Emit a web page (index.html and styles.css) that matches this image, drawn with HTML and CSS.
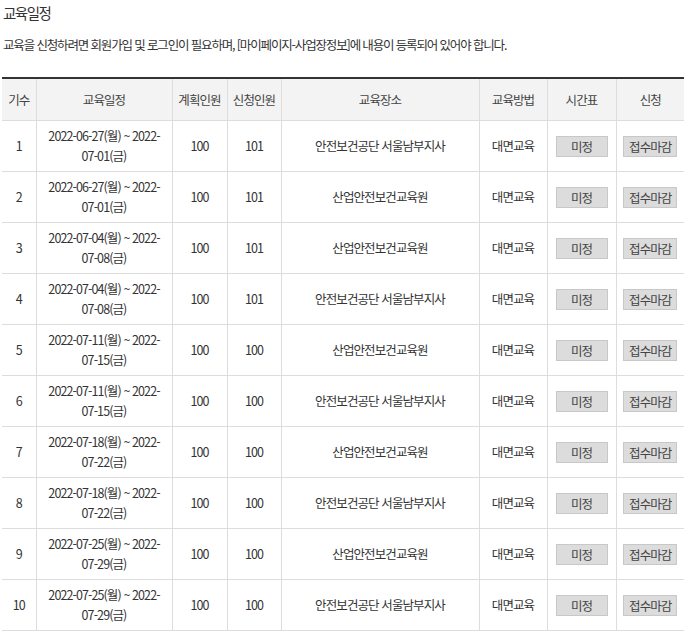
FILE: index.html
```html
<!DOCTYPE html>
<html lang="ko">
<head>
<meta charset="utf-8">
<link rel="stylesheet" href="styles.css">
</head>
<body>
<div class="page">
  <h2 class="title">교육일정</h2>
  <p class="desc">교육을 신청하려면 회원가입 및 로그인이 필요하며, [마이페이지-사업장정보]에 내용이 등록되어 있어야 합니다.</p>
  <table class="sched">
    <colgroup>
      <col class="c1"><col class="c2"><col class="c3"><col class="c4"><col class="c5"><col class="c6"><col class="c7"><col class="c8">
    </colgroup>
    <thead>
      <tr><th>기수</th><th>교육일정</th><th>계획인원</th><th>신청인원</th><th>교육장소</th><th>교육방법</th><th>시간표</th><th>신청</th></tr>
    </thead>
    <tbody>
      <tr><td>1</td><td>2022-06-27(월) ~ 2022-07-01(금)</td><td>100</td><td>101</td><td>안전보건공단 서울남부지사</td><td>대면교육</td><td><span class="btn b1">미정</span></td><td><span class="btn b2">접수마감</span></td></tr>
      <tr><td>2</td><td>2022-06-27(월) ~ 2022-07-01(금)</td><td>100</td><td>101</td><td>산업안전보건교육원</td><td>대면교육</td><td><span class="btn b1">미정</span></td><td><span class="btn b2">접수마감</span></td></tr>
      <tr><td>3</td><td>2022-07-04(월) ~ 2022-07-08(금)</td><td>100</td><td>101</td><td>산업안전보건교육원</td><td>대면교육</td><td><span class="btn b1">미정</span></td><td><span class="btn b2">접수마감</span></td></tr>
      <tr><td>4</td><td>2022-07-04(월) ~ 2022-07-08(금)</td><td>100</td><td>101</td><td>안전보건공단 서울남부지사</td><td>대면교육</td><td><span class="btn b1">미정</span></td><td><span class="btn b2">접수마감</span></td></tr>
      <tr><td>5</td><td>2022-07-11(월) ~ 2022-07-15(금)</td><td>100</td><td>100</td><td>산업안전보건교육원</td><td>대면교육</td><td><span class="btn b1">미정</span></td><td><span class="btn b2">접수마감</span></td></tr>
      <tr><td>6</td><td>2022-07-11(월) ~ 2022-07-15(금)</td><td>100</td><td>100</td><td>안전보건공단 서울남부지사</td><td>대면교육</td><td><span class="btn b1">미정</span></td><td><span class="btn b2">접수마감</span></td></tr>
      <tr><td>7</td><td>2022-07-18(월) ~ 2022-07-22(금)</td><td>100</td><td>100</td><td>산업안전보건교육원</td><td>대면교육</td><td><span class="btn b1">미정</span></td><td><span class="btn b2">접수마감</span></td></tr>
      <tr><td>8</td><td>2022-07-18(월) ~ 2022-07-22(금)</td><td>100</td><td>100</td><td>안전보건공단 서울남부지사</td><td>대면교육</td><td><span class="btn b1">미정</span></td><td><span class="btn b2">접수마감</span></td></tr>
      <tr><td>9</td><td>2022-07-25(월) ~ 2022-07-29(금)</td><td>100</td><td>100</td><td>산업안전보건교육원</td><td>대면교육</td><td><span class="btn b1">미정</span></td><td><span class="btn b2">접수마감</span></td></tr>
      <tr><td>10</td><td>2022-07-25(월) ~ 2022-07-29(금)</td><td>100</td><td>100</td><td>안전보건공단 서울남부지사</td><td>대면교육</td><td><span class="btn b1">미정</span></td><td><span class="btn b2">접수마감</span></td></tr>
    </tbody>
  </table>
</div>
</body>
</html>
```

FILE: styles.css
```css
html, body {
  margin: 0;
  padding: 0;
  background: #fff;
}
body {
  font-family: "Noto Sans CJK KR", "Noto Sans", sans-serif;
  font-feature-settings: "palt";
  color: #333;
  font-size: 12.5px;
  letter-spacing: -0.9px;
}
.page {
  padding: 0 6px 0 2px;
}
.title {
  margin: 0;
  padding: 2px 0 0 1px;
  font-size: 14.5px;
  letter-spacing: -1.5px;
  font-weight: normal;
  line-height: 22px;
  color: #333;
}
.desc {
  margin: 0;
  padding: 11px 0 0 1px;
  font-size: 12.5px;
  letter-spacing: -1.15px;
  line-height: 20px;
  color: #333;
}
.sched {
  margin-top: 22px;
  width: 682px;
  border-collapse: collapse;
  table-layout: fixed;
  border-top: 2px solid #333;
}
.c1 { width: 34px; }
.c2 { width: 136px; }
.c3 { width: 55px; }
.c4 { width: 54px; }
.c5 { width: 198px; }
.c6 { width: 68px; }
.c7 { width: 69px; }
.c8 { width: 68px; }
.sched th {
  height: 41px;
  padding: 0;
  background: #f3f3f3;
  font-weight: normal;
  color: #444;
  font-size: 12.5px;
  border-left: 1px solid #ddd;
  border-bottom: 1px solid #ddd;
}
.sched td {
  height: 50px;
  padding: 0 4px;
  text-align: center;
  line-height: 20px;
  color: #333;
  border-left: 1px solid #ddd;
  border-bottom: 1px solid #ddd;
}
.sched th:first-child, .sched td:first-child {
  border-left: none;
}
.sched td:nth-child(2) {
  padding: 0 8px;
}
.btn {
  display: inline-block;
  height: 19px;
  line-height: 19px;
  background: #dcdcdc;
  border: 1px solid #c8c8c8;
  color: #444;
  font-size: 12.5px;
  vertical-align: middle;
}
.b1 { width: 50px; }
.b2 { width: 52px; }
```
